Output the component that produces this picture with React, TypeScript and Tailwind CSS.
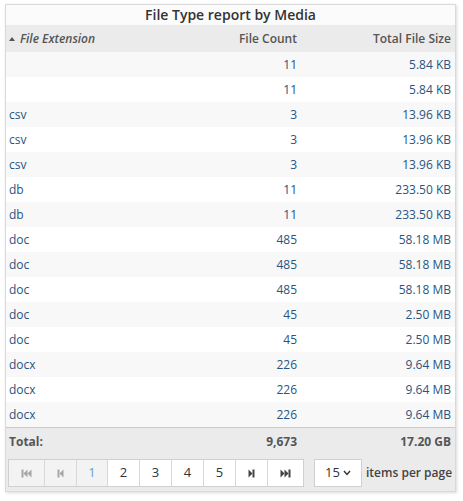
import React from "react";

const rows: [string, string, string][] = [
  ["", "11", "5.84 KB"],
  ["", "11", "5.84 KB"],
  ["csv", "3", "13.96 KB"],
  ["csv", "3", "13.96 KB"],
  ["csv", "3", "13.96 KB"],
  ["db", "11", "233.50 KB"],
  ["db", "11", "233.50 KB"],
  ["doc", "485", "58.18 MB"],
  ["doc", "485", "58.18 MB"],
  ["doc", "485", "58.18 MB"],
  ["doc", "45", "2.50 MB"],
  ["doc", "45", "2.50 MB"],
  ["docx", "226", "9.64 MB"],
  ["docx", "226", "9.64 MB"],
  ["docx", "226", "9.64 MB"],
];

function Icon({ kind, color }: { kind: "first" | "prev" | "next" | "last"; color: string }) {
  return (
    <svg width="11" height="9" viewBox="0 0 11 9" fill={color}>
      {kind === "first" && (
        <>
          <rect x="0.5" y="0.5" width="2" height="8" />
          <polygon points="6.5,0.5 6.5,8.5 2.5,4.5" />
          <polygon points="10.5,0.5 10.5,8.5 6.5,4.5" />
        </>
      )}
      {kind === "prev" && (
        <>
          <rect x="2.5" y="0.5" width="2" height="8" />
          <polygon points="8.5,0.5 8.5,8.5 4.5,4.5" />
        </>
      )}
      {kind === "next" && (
        <>
          <polygon points="2.5,0.5 2.5,8.5 6.5,4.5" />
          <rect x="6.5" y="0.5" width="2" height="8" />
        </>
      )}
      {kind === "last" && (
        <>
          <polygon points="0.5,0.5 0.5,8.5 4.5,4.5" />
          <polygon points="4.5,0.5 4.5,8.5 8.5,4.5" />
          <rect x="8.5" y="0.5" width="2" height="8" />
        </>
      )}
    </svg>
  );
}

export default function App() {
  return (
    <div className="pt-[4px] pl-[5px] bg-white min-h-[501px]" style={{ fontFamily: "'Open Sans', 'Liberation Sans', sans-serif" }}>
      <div className="w-[451px] border border-[#d9d9d9] shadow-[1px_1px_3px_rgba(0,0,0,0.15)] bg-white">
        <div className="h-[20px] bg-[#fbfbfb] flex items-center justify-center text-[14px] font-semibold text-[#333] leading-none">
          File Type report by Media
        </div>
        <div className="h-[27px] bg-[#ebebeb] grid grid-cols-[1fr_100px_154px] items-center text-[12px] font-semibold text-[#555]">
          <div className="pl-[3px] flex items-center gap-[5px]">
            <svg width="6" height="4" viewBox="0 0 6 4" fill="#555">
              <polygon points="0,4 3,0 6,4" />
            </svg>
            <span className="italic">File Extension</span>
          </div>
          <div className="text-right pr-[4px]">File Count</div>
          <div className="text-right pr-[4px]">Total File Size</div>
        </div>
        {rows.map((r, i) => (
          <div
            key={i}
            className={`h-[25px] grid grid-cols-[1fr_100px_154px] items-center text-[12px] text-[#28557f] ${i % 2 === 0 ? "bg-[#f8f8f8]" : "bg-white"}`}
          >
            <div className="pl-[3px]">{r[0]}</div>
            <div className="text-right pr-[4px]">{r[1]}</div>
            <div className="text-right pr-[4px]">{r[2]}</div>
          </div>
        ))}
        <div className="border-t border-[#c9c9c9] h-[28px] bg-[#ebebeb] grid grid-cols-[1fr_100px_154px] items-center text-[12px] font-bold text-[#555]">
          <div className="pl-[3px]">Total:</div>
          <div className="text-right pr-[4px]">9,673</div>
          <div className="text-right pr-[4px]">17.20 GB</div>
        </div>
        <div className="bg-[#ebebeb] pt-[4px] pb-[4px] pl-[2px] flex items-center">
          <div className="flex h-[28px] border border-[#d0d0d0] bg-white">
            <div className="w-[36px] flex items-center justify-center bg-[#f3f3f3] border-r border-[#d8d8d8]">
              <Icon kind="first" color="#a6a6a6" />
            </div>
            <div className="w-[32px] flex items-center justify-center bg-[#f3f3f3] border-r border-[#d8d8d8]">
              <Icon kind="prev" color="#a6a6a6" />
            </div>
            <div className="w-[31px] flex items-center justify-center bg-[#f3f3f3] border-r border-[#d8d8d8] text-[13px] text-[#6e9ccb]">1</div>
            {["2", "3", "4", "5"].map((n) => (
              <div key={n} className="w-[32px] flex items-center justify-center border-r border-[#d8d8d8] text-[13px] text-[#333]">
                {n}
              </div>
            ))}
            <div className="w-[32px] flex items-center justify-center border-r border-[#d8d8d8]">
              <Icon kind="next" color="#444" />
            </div>
            <div className="w-[35px] flex items-center justify-center">
              <Icon kind="last" color="#444" />
            </div>
          </div>
          <div className="ml-[10px] w-[48px] h-[28px] border border-[#d0d0d0] bg-white flex items-center justify-center gap-[3px] text-[13px] text-[#333]">
            <span>15</span>
            <svg width="8" height="6" viewBox="0 0 8 6" fill="none" stroke="#333" strokeWidth="1.4">
              <polyline points="1,1 4,4.5 7,1" />
            </svg>
          </div>
          <div className="ml-[4px] text-[12px] font-semibold text-[#444]">items per page</div>
        </div>
      </div>
    </div>
  );
}
